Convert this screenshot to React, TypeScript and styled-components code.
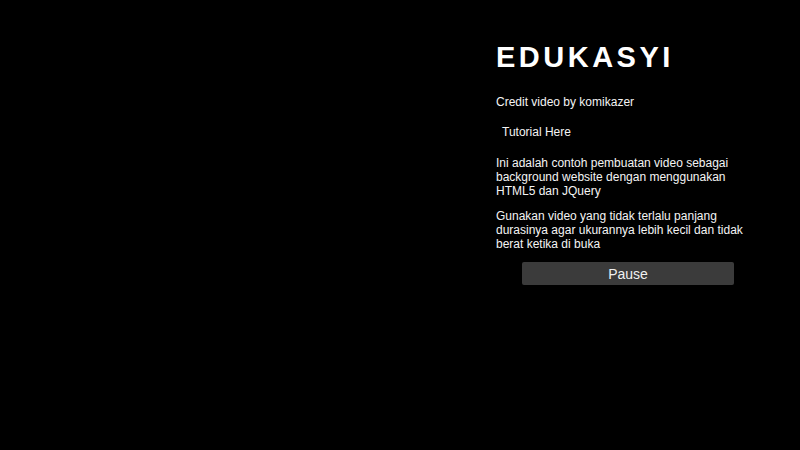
import styled, { createGlobalStyle } from "styled-components";
import { useState } from "react";

const GlobalStyle = createGlobalStyle`
  html,
  body {
    margin: 0;
    padding: 0;
    background: #000;
  }
  * {
    box-sizing: border-box;
  }
`;

const PageDIV = styled.div`
  width: 100%;
  min-height: 100vh;
  background: #000;
  display: flex;
  justify-content: flex-end;
  align-items: flex-start;
  font-family: "Liberation Sans", Arial, sans-serif;
  color: #fff;
`;

const InfoPanel = styled.section`
  width: 264px;
  margin: 41px 40px 0 0;
  font-size: 12px;
  line-height: 14px;
`;

const Title = styled.h1`
  margin: 0 0 22px 0;
  font-size: 29px;
  line-height: 32px;
  font-weight: 700;
  letter-spacing: 3.5px;
  text-transform: uppercase;
`;

const Paragraph = styled.p<{ $gap?: number }>`
  margin: 0 0 ${(p) => p.$gap ?? 11}px 0;
  color: #f4f4f4;
`;

const TutorialLink = styled.a`
  display: block;
  margin: 0 0 17px 0;
  padding-left: 6px;
  color: #f4f4f4;
  text-decoration: none;
`;

const PauseButton = styled.button`
  display: block;
  width: 212px;
  height: 23px;
  margin: 8px auto 0 auto;
  padding: 0;
  border: none;
  border-radius: 2px;
  background: #3b3b3b;
  color: #f0f0f0;
  font-family: "Liberation Sans", Arial, sans-serif;
  font-size: 14px;
  cursor: pointer;
`;

const App = () => {
  const [paused, setPaused] = useState(false);

  return (
    <>
      <GlobalStyle />
      <PageDIV>
        <InfoPanel>
          <Title>Edukasyi</Title>
          <Paragraph $gap={16}>Credit video by komikazer</Paragraph>
          <TutorialLink href="#">Tutorial Here</TutorialLink>
          <Paragraph>
            Ini adalah contoh pembuatan video sebagai background website dengan
            menggunakan HTML5 dan JQuery
          </Paragraph>
          <Paragraph>
            Gunakan video yang tidak terlalu panjang durasinya agar ukurannya
            lebih kecil dan tidak berat ketika di buka
          </Paragraph>
          <PauseButton onClick={() => setPaused(!paused)}>
            {paused ? "Play" : "Pause"}
          </PauseButton>
        </InfoPanel>
      </PageDIV>
    </>
  );
};

export default App;
